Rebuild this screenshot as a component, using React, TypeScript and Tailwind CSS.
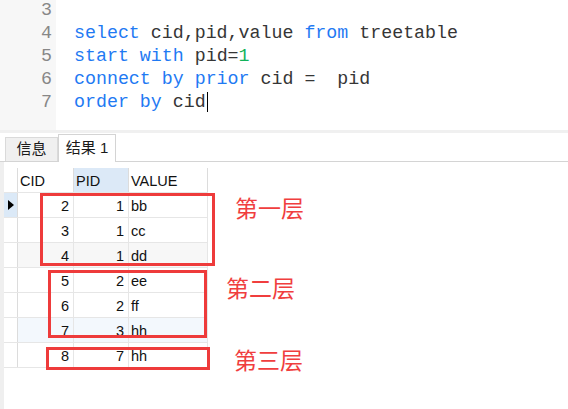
import React from 'react';

const mono = { fontFamily: '"Liberation Mono", "DejaVu Sans Mono", monospace' };

const KW = 'text-[#1f7af3]';
const ID = 'text-[#363636]';

// editor lines: line number + tokens
const codeLines: { n: number; parts: [string, string][] }[] = [
  { n: 3, parts: [] },
  {
    n: 4,
    parts: [
      ['select', KW],
      [' cid,pid,value ', ID],
      ['from', KW],
      [' treetable', ID],
    ],
  },
  {
    n: 5,
    parts: [
      ['start with', KW],
      [' pid=', ID],
      ['1', 'text-[#12b35a]'],
    ],
  },
  {
    n: 6,
    parts: [
      ['connect by prior', KW],
      [' cid =  pid', ID],
    ],
  },
  {
    n: 7,
    parts: [
      ['order by', KW],
      [' cid', ID],
    ],
  },
];

const rows = [
  { cid: 2, pid: 1, value: 'bb', bg: 'bg-white' },
  { cid: 3, pid: 1, value: 'cc', bg: 'bg-white' },
  { cid: 4, pid: 1, value: 'dd', bg: 'bg-[#f7f7f7]' },
  { cid: 5, pid: 2, value: 'ee', bg: 'bg-white' },
  { cid: 6, pid: 2, value: 'ff', bg: 'bg-white' },
  { cid: 7, pid: 3, value: 'hh', bg: 'bg-[#f3f8fd]' },
  { cid: 8, pid: 7, value: 'hh', bg: 'bg-white' },
];

const cjk = { fontFamily: '"Noto Sans CJK SC", sans-serif' };

const App: React.FC = () => {
  return (
    <div
      className="relative w-[568px] h-[409px] overflow-hidden bg-white"
      style={{ fontFamily: '"Liberation Sans", "Noto Sans CJK SC", sans-serif' }}
    >
      {/* editor */}
      <div className="flex h-[130px] overflow-hidden">
        <div className="w-[56px] shrink-0 bg-[#f7f7f7]" />
        <div className="flex-1" />
      </div>
      <div className="absolute left-0 top-[-1px] w-[568px]" style={mono}>
        {codeLines.map((line) => (
          <div key={line.n} className="flex h-[23px] items-center text-[18.3px] leading-[23px]">
            <span className="w-[52px] shrink-0 text-right text-[#878787]">{line.n}</span>
            <span className="ml-[22px] whitespace-pre">
              {line.parts.map(([t, c], i) => (
                <span key={i} className={c}>
                  {t}
                </span>
              ))}
              {line.n === 7 && (
                <span className="ml-[1px] inline-block h-[20px] w-[1px] bg-black align-middle" />
              )}
            </span>
          </div>
        ))}
      </div>

      <div className="h-[3px] bg-[#f0f0f0]" />

      {/* tabs */}
      <div className="flex h-[29px] items-end border-b border-[#d4d4d4] pl-[5px]">
        <div className="flex h-[24px] w-[53px] items-center justify-center border border-b-0 border-[#dadada] bg-[#f0f0f0] text-[15px] text-[#1a1a1a]">
          信息
        </div>
        <div className="-mb-px flex h-[28px] w-[58px] items-center justify-center border border-b-0 border-[#d4d4d4] bg-white text-[15px] text-[#1a1a1a]">
          结果 1
        </div>
      </div>

      {/* result grid */}
      <div className="flex h-[247px]">
        <div className="w-[4px] shrink-0 bg-[#efefef]" />
        <div className="mt-[6px] flex flex-col text-[14.5px] text-[#111]">
          <div className="flex h-[25px] border-b border-[#e6e6e6]">
            <div className="w-[14px] border-r border-[#dcdcdc]" />
            <div className="flex w-[56px] items-center border-r border-[#dcdcdc] pl-[2px] pt-[3px]">CID</div>
            <div className="flex w-[55px] items-center border-r border-[#dcdcdc] bg-[#dce9f7] pl-[2px] pt-[3px]">PID</div>
            <div className="flex w-[79px] items-center border-r border-[#dcdcdc] pl-[2px] pt-[3px]">VALUE</div>
          </div>
          {rows.map((r, i) => (
            <div key={i} className={`flex h-[25px] border-b border-[#e6e6e6] ${r.bg}`}>
              <div
                className={`flex w-[14px] items-center justify-center border-r border-[#dcdcdc] ${
                  i === 0 ? 'bg-[#dbe9f7]' : 'bg-white'
                }`}
              >
                {i === 0 && (
                  <svg width="6" height="10" viewBox="0 0 6 10">
                    <path d="M0 0 L6 5 L0 10 Z" fill="#000" />
                  </svg>
                )}
              </div>
              <div className="flex w-[56px] items-center justify-end border-r border-[#e6e6e6] pr-[4px] pt-[3px]">{r.cid}</div>
              <div className="flex w-[55px] items-center justify-end border-r border-[#e6e6e6] pr-[4px] pt-[3px]">{r.pid}</div>
              <div className="flex w-[79px] items-center border-r border-[#e6e6e6] pl-[2px] pt-[3px]">{r.value}</div>
            </div>
          ))}
        </div>
      </div>

      {/* annotations */}
      <div className="absolute left-[40px] top-[193px] h-[73px] w-[175px] border-[3px] border-[#ee3b3b]" />
      <div className="absolute left-[48px] top-[270px] h-[68px] w-[159px] border-[3px] border-[#ee3b3b]" />
      <div className="absolute left-[46px] top-[347px] h-[23px] w-[164px] border-[3px] border-[#ee3b3b]" />

      <div className="absolute left-[235px] top-[196px] text-[23px] leading-[23px] text-[#f03e3e]" style={cjk}>
        第一层
      </div>
      <div className="absolute left-[226px] top-[276px] text-[23px] leading-[23px] text-[#f03e3e]" style={cjk}>
        第二层
      </div>
      <div className="absolute left-[234px] top-[348px] text-[23px] leading-[23px] text-[#f03e3e]" style={cjk}>
        第三层
      </div>
    </div>
  );
};

export default App;
